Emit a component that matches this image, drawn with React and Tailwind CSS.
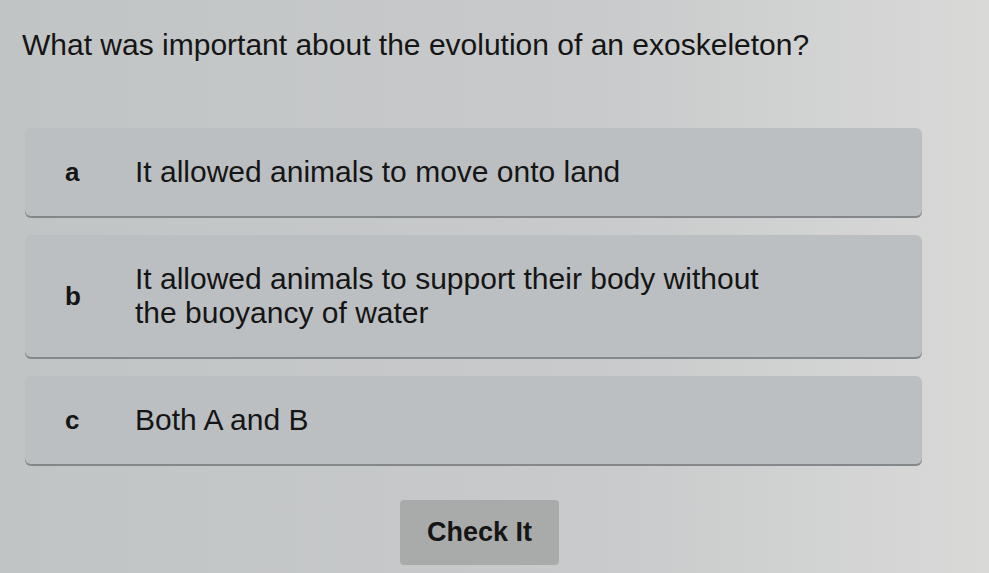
import React from "react";

const options = [
	{ id: "a", text: "It allowed animals to move onto land" },
	{
		id: "b",
		text: "It allowed animals to support their body without the buoyancy of water",
	},
	{ id: "c", text: "Both A and B" },
];

export default function App() {
	return (
		<div className="w-screen h-[573px] overflow-hidden bg-[linear-gradient(90deg,#c1c4c5_0%,#c8cacb_60%,#d9d9d8_100%)] font-['Liberation_Sans',Arial,sans-serif] text-[#151515]">
			{/* Question */}
			<h1 className="pl-[22px] pt-[28px] text-[30px] leading-[34px] font-normal">
				What was important about the evolution of an exoskeleton?
			</h1>

			{/* Options */}
			<div className="ml-[25px] mt-[66px] w-[897px] flex flex-col gap-[19px]">
				{options.map((opt) => (
					<div
						key={opt.id}
						className="flex items-center min-h-[88px] py-[27px] pl-[40px] pr-6 rounded-[6px] bg-[#bbbfc2] shadow-[0_2px_0_#85888b]"
					>
						<span className="w-[70px] shrink-0 text-[26px] leading-[34px] font-bold">
							{opt.id}
						</span>
						<span className="max-w-[660px] text-[30px] leading-[34px]">
							{opt.text}
						</span>
					</div>
				))}
			</div>

			{/* Check button */}
			<div className="flex justify-center pr-[30px] mt-[36px]">
				<button className="w-[159px] h-[65px] rounded-[4px] bg-[#a9abab] text-[27px] font-bold text-[#151515]">
					Check It
				</button>
			</div>
		</div>
	);
}
